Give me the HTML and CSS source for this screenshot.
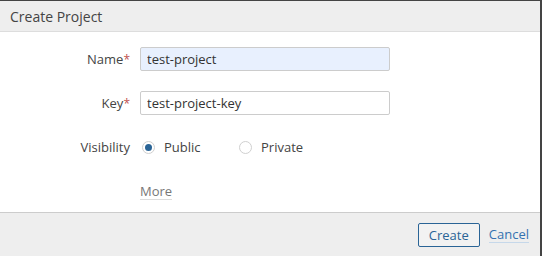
FILE: index.html
```html
<!DOCTYPE html>
<html lang="en">
<head>
    <meta charset="UTF-8">
    <title>Create Project</title>
    <link rel="stylesheet" href="styles.css">
</head>
<body>
    <div class="dialog">
        <div class="dialog-header">
            <h2>Create Project</h2>
        </div>

        <form class="dialog-body">
            <div class="field">
                <label for="name">Name<span class="req">*</span></label>
                <input type="text" id="name" class="autofill" value="test-project">
            </div>

            <div class="field">
                <label for="key">Key<span class="req">*</span></label>
                <input type="text" id="key" value="test-project-key">
            </div>

            <div class="field">
                <label>Visibility</label>
                <div class="radios">
                    <span class="radio">
                        <span class="dot checked"></span>
                        Public
                    </span>
                    <span class="radio">
                        <span class="dot"></span>
                        Private
                    </span>
                </div>
            </div>

            <div class="field">
                <label></label>
                <a class="more">More</a>
            </div>
        </form>

        <div class="dialog-footer">
            <button type="button" class="btn">Create</button>
            <a class="cancel">Cancel</a>
        </div>
    </div>
</body>
</html>
```

FILE: styles.css
```css
body {
    margin: 0;
    font-family: "Open Sans", "Noto Sans", sans-serif;
    font-size: 13px;
    color: #333;
    background: #fff;
}

.dialog {
    height: 256px;
    box-sizing: border-box;
    border-top: 1px solid #444;
    border-right: 2px solid #444;
    display: flex;
    flex-direction: column;
}

.dialog-header {
    height: 30px;
    background-color: #eee;
    border-bottom: 1px solid #ddd;
    display: flex;
    align-items: center;
    padding-left: 10px;
}

.dialog-header h2 {
    margin: 0;
    font-size: 14px;
    font-weight: normal;
    color: #444;
}

.dialog-body {
    flex: 1;
    padding-top: 15px;
    display: flex;
    flex-direction: column;
    gap: 20px;
}

.field {
    display: flex;
    align-items: center;
    height: 24px;
}

.field label {
    width: 140px;
    text-align: right;
    padding-right: 10px;
    box-sizing: border-box;
    color: #444;
}

.req {
    color: #c0504d;
    font-size: 12px;
}

.field input {
    width: 250px;
    height: 24px;
    box-sizing: border-box;
    border: 1px solid #ccc;
    border-radius: 2px;
    padding: 0 6px;
    font-family: inherit;
    font-size: 13px;
    color: #333;
    background: #fff;
}

.field input.autofill {
    background-color: #e8f0fe;
}

.radios {
    display: flex;
}

.radio {
    display: flex;
    align-items: center;
    width: 97px;
    color: #444;
}

.dot {
    width: 13px;
    height: 13px;
    box-sizing: border-box;
    border: 1px solid #d0d0d0;
    border-radius: 50%;
    margin: 0 9px 0 2px;
    display: flex;
    align-items: center;
    justify-content: center;
}

.dot.checked::after {
    content: "";
    width: 7px;
    height: 7px;
    border-radius: 50%;
    background-color: #2a6496;
}

.more {
    color: #777;
    text-decoration: none;
    border-bottom: 1px solid #ddd;
    line-height: 16px;
}

.dialog-footer {
    height: 44px;
    box-sizing: border-box;
    background-color: #eee;
    border-top: 1px solid #ccc;
    display: flex;
    justify-content: flex-end;
    align-items: center;
    gap: 9px;
    padding-right: 11px;
}

.btn {
    width: 62px;
    height: 24px;
    border: 1px solid #2a6496;
    border-radius: 2px;
    background: #f2f2f2;
    color: #2a6496;
    font-family: inherit;
    font-size: 13px;
    padding: 0;
    cursor: pointer;
}

.cancel {
    color: #3572b0;
    text-decoration: none;
    border-bottom: 1px solid #c6d8ea;
    line-height: 16px;
}
```
